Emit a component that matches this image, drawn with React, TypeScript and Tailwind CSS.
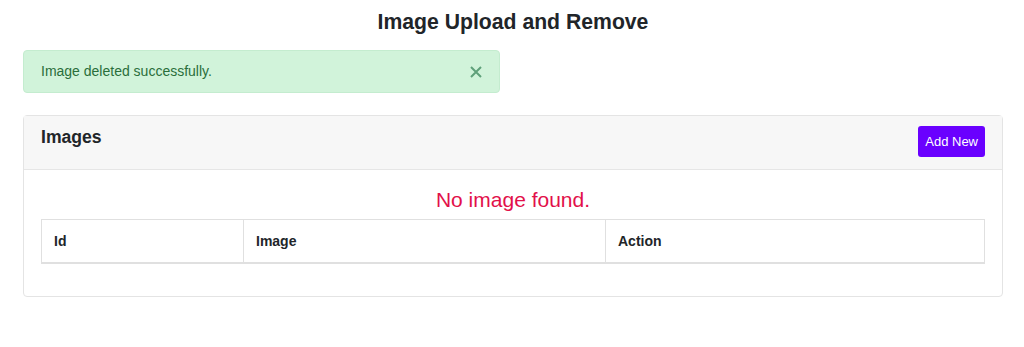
import { useState } from 'react'

export default function App() {
  const [showAlert, setShowAlert] = useState(true)
  const images: { id: number; url: string }[] = []

  return (
    <div className="min-h-screen bg-white pl-[23px] pr-[21px] text-[#212529] [font-family:'Liberation_Sans',Arial,sans-serif]">
      <h1 className="pt-[9px] text-center text-[21.2px] font-bold leading-[26px]">Image Upload and Remove</h1>

      {showAlert && (
        <div className="mt-[15px] flex w-[477px] items-center justify-between rounded-[4px] border border-[#c4eccf] bg-[#d1f3da] pl-[17px] pr-[14px] py-[11px] text-[14px] leading-[19px] text-[#2a6e3b]">
          <span>Image deleted successfully.</span>
          <button
            type="button"
            onClick={() => setShowAlert(false)}
            className="flex h-[19px] w-[19px] items-center justify-center text-[#5fa07a]"
          >
            <svg width="12" height="12" viewBox="0 0 12 12" fill="none" stroke="currentColor" strokeWidth="2">
              <path d="M1 1L11 11M11 1L1 11" />
            </svg>
          </button>
        </div>
      )}

      <div className="mt-[22px] rounded-[4px] border border-[#e4e4e4]">
        <div className="flex items-start justify-between border-b border-[#e6e6e6] bg-[#f7f7f7] pl-[17px] pr-[17px] pt-[10px] pb-[12px]">
          <h2 className="-mt-[1px] text-[17.6px] font-bold leading-[24px]">Images</h2>
          <button className="h-[31px] rounded-[3px] bg-[#6a00ff] px-[7px] text-[13px] text-white">Add New</button>
        </div>

        <div className="px-[17px] pt-[15px] pb-[32px]">
          {images.length === 0 && (
            <p className="mb-[4px] text-center text-[21px] leading-[30px] text-[#e2104a]">No image found.</p>
          )}
          <table className="w-full border-collapse text-left text-[14px]">
            <thead>
              <tr className="border border-[#e0e0e0] border-b-2">
                <th className="w-[202px] border-r border-[#e0e0e0] px-[12px] pt-[12px] pb-[11px] font-bold leading-[19px]">Id</th>
                <th className="w-[362px] border-r border-[#e0e0e0] px-[12px] pt-[12px] pb-[11px] font-bold leading-[19px]">Image</th>
                <th className="px-[12px] pt-[12px] pb-[11px] font-bold leading-[19px]">Action</th>
              </tr>
            </thead>
            <tbody>
              {images.map((img) => (
                <tr key={img.id}>
                  <td>{img.id}</td>
                  <td>{img.url}</td>
                  <td />
                </tr>
              ))}
            </tbody>
          </table>
        </div>
      </div>
    </div>
  )
}
